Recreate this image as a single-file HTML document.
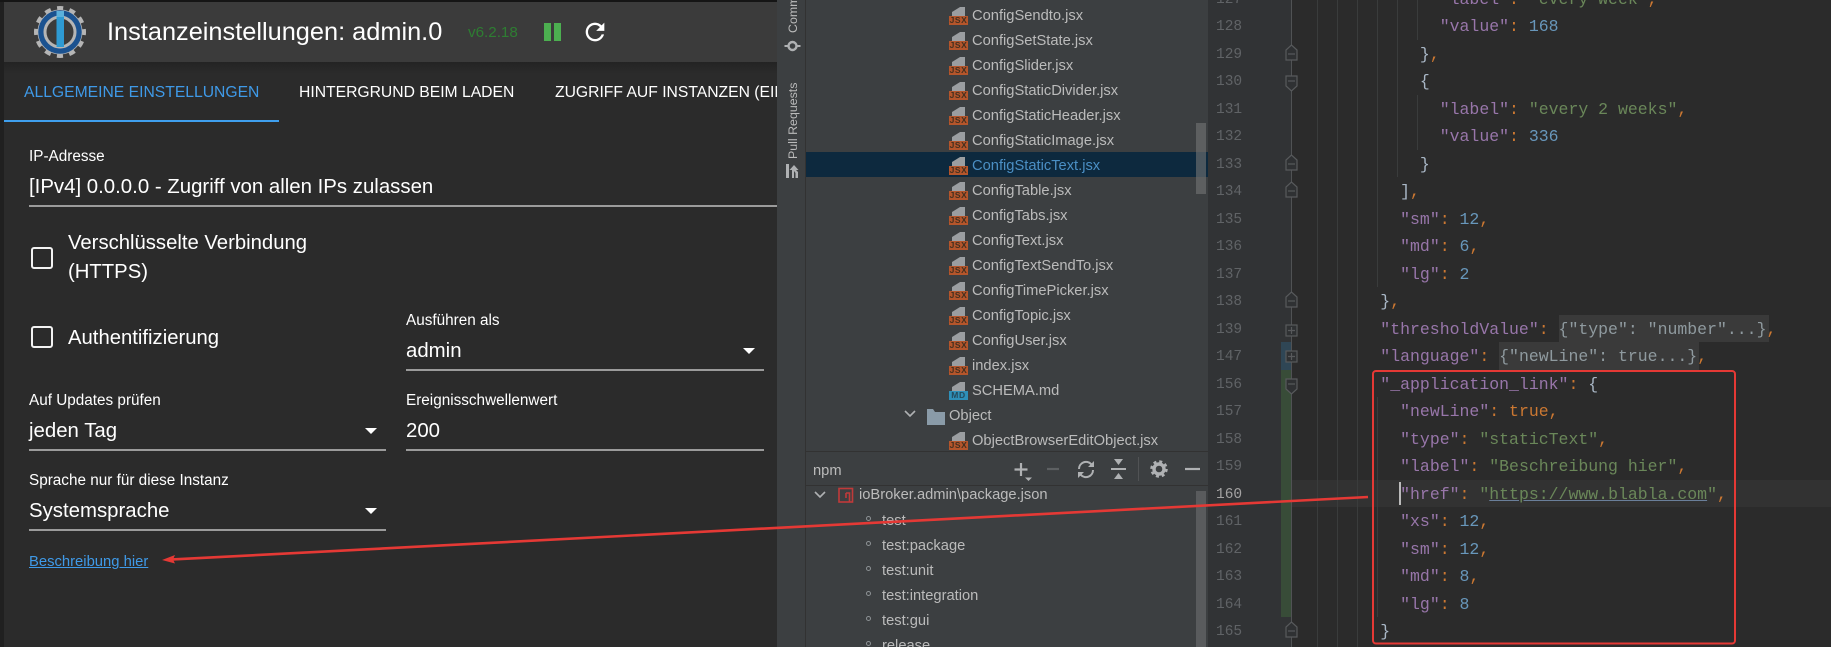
<!DOCTYPE html>
<html><head><meta charset="utf-8"><title>Instanzeinstellungen</title>
<style>
html,body{margin:0;padding:0;width:1831px;height:647px;overflow:hidden;background:#2b2b2b}
body{position:relative;font-family:"Liberation Sans",sans-serif}
.b{position:absolute}
.t{position:absolute;white-space:pre;line-height:24px;height:24px}
.lb{font-size:15.3px;color:#fff}
.v{font-size:20.4px;color:#fff}
.tab{font-size:15.7px;color:#fff}
.ul{position:absolute;height:2px;background:#9b9b9b}
.cb{position:absolute;width:18px;height:18px;border:2px solid #f2f2f2;border-radius:3px;left:31px}
.ar{position:absolute;width:0;height:0;border-left:6px solid transparent;border-right:6px solid transparent;border-top:6px solid #fff}
.f{position:absolute;left:972px;font-size:14.7px;color:#bbb;white-space:pre;line-height:24px;height:24px}
.i{position:absolute;left:949px;width:19px;height:19px}
.i:before{content:"";position:absolute;left:3px;top:0;width:13px;height:9px;background:#9b9ea1;clip-path:polygon(0 100%,0 55%,62% 0,100% 0,100% 100%)}
.i span{position:absolute;left:0;top:9px;width:19px;height:9px;background:#b4552b;color:#43301f;font:bold 8.5px/9px "Liberation Sans",sans-serif;text-align:center;letter-spacing:.6px}
.i.md span{background:#2e8fb8;color:#254a5c}
.c{position:absolute;left:1380.3px;margin-top:1px;font:16.5px/28px "Liberation Mono",monospace;white-space:pre;color:#a9b7c6;height:28px}
.n{position:absolute;left:1216px;margin-top:1px;font:14.5px/28px "Liberation Mono",monospace;color:#606366;height:28px}
.k{color:#9876aa}.s{color:#6a8759}.d{color:#6897bb}.o{color:#cc7832}
.m{position:absolute;left:882px;margin-top:1px;font-size:14.7px;color:#bbb;white-space:pre;line-height:24px;height:24px}
.dot{position:absolute;left:865.5px;width:3px;height:3px;border:1.5px solid #8d9295;border-radius:50%}
</style></head><body>

<!-- left app -->
<div class="b" style="left:0;top:0;width:777px;height:647px;background:#2b2b2b"></div>
<div class="b" style="left:0;top:0;width:4px;height:647px;background:#202020"></div>
<div class="b" style="left:0;top:0;width:777px;height:2px;background:#151515"></div>
<div class="b" style="left:4px;top:2px;width:773px;height:60px;background:#3b3b3b"></div>
<div class="b" style="left:4px;top:62px;width:773px;height:12px;background:linear-gradient(#232323,#2b2b2b)"></div>

<svg class="b" style="left:30px;top:2px" width="60" height="60" viewBox="0 0 60 60">
<circle cx="30" cy="30" r="23.5" fill="none" stroke="#b5b5b5" stroke-width="5" stroke-dasharray="6 6.3" stroke-dashoffset="3"/>
<circle cx="30" cy="30" r="22.5" fill="#b5b5b5"/>
<circle cx="30" cy="30" r="19" fill="none" stroke="#1b5290" stroke-width="5.5"/>
<circle cx="30" cy="30" r="15" fill="#3b3b3b" stroke="#b5b5b5" stroke-width="3"/>
<rect x="26.5" y="9" width="7.5" height="36" fill="#2e9ad3"/>
<rect x="26.5" y="9" width="7.5" height="6" fill="#5cb1dc"/>
</svg>
<div class="t" style="left:107px;top:20px;font-size:25.35px;color:#fff">Instanzeinstellungen: admin.0</div>
<div class="t" style="left:468px;top:21px;font-size:15.2px;color:#2e7d32">v6.2.18</div>
<div class="b" style="left:544px;top:23px;width:6.5px;height:18px;background:#4caf50"></div>
<div class="b" style="left:554px;top:23px;width:6.5px;height:18px;background:#4caf50"></div>
<svg class="b" style="left:581px;top:18px" width="28" height="28" viewBox="0 0 24 24"><path fill="#fff" d="M17.65 6.35C16.2 4.9 14.21 4 12 4c-4.42 0-7.99 3.58-7.99 8s3.57 8 7.99 8c3.73 0 6.84-2.55 7.73-6h-2.08c-.82 2.33-3.04 4-5.65 4-3.31 0-6-2.69-6-6s2.69-6 6-6c1.66 0 3.14.69 4.22 1.78L13 11h7V4l-2.35 2.35z"/></svg>

<div class="t tab" style="left:24px;top:81px;color:#3f9ae8">ALLGEMEINE EINSTELLUNGEN</div>
<div class="t tab" style="left:299px;top:81px">HINTERGRUND BEIM LADEN</div>
<div class="t tab" style="left:555px;top:81px">ZUGRIFF AUF INSTANZEN (EINSTELLUNGEN)</div>
<div class="b" style="left:4px;top:120px;width:275px;height:2px;background:#3f9fee"></div>

<div class="t lb" style="left:29px;top:145px">IP-Adresse</div>
<div class="t v" style="left:29px;top:175px">[IPv4] 0.0.0.0 - Zugriff von allen IPs zulassen</div>
<div class="ul" style="left:29px;top:205px;width:748px"></div>

<div class="cb" style="top:247px"></div>
<div class="t" style="left:68px;top:231px;font-size:20.3px;color:#fff">Verschlüsselte Verbindung</div>
<div class="t" style="left:68px;top:260px;font-size:20.3px;color:#fff">(HTTPS)</div>

<div class="cb" style="top:326px"></div>
<div class="t" style="left:68px;top:326px;font-size:20.3px;color:#fff">Authentifizierung</div>

<div class="t lb" style="left:406px;top:309px">Ausführen als</div>
<div class="t v" style="left:406px;top:339px">admin</div>
<div class="ar" style="left:743px;top:348px"></div>
<div class="ul" style="left:406px;top:369px;width:358px"></div>

<div class="t lb" style="left:29px;top:389px">Auf Updates prüfen</div>
<div class="t v" style="left:29px;top:419px">jeden Tag</div>
<div class="ar" style="left:365px;top:428px"></div>
<div class="ul" style="left:29px;top:449px;width:357px"></div>

<div class="t lb" style="left:406px;top:389px">Ereignisschwellenwert</div>
<div class="t v" style="left:406px;top:419px">200</div>
<div class="ul" style="left:406px;top:449px;width:358px"></div>

<div class="t lb" style="left:29px;top:469px">Sprache nur für diese Instanz</div>
<div class="t v" style="left:29px;top:499px">Systemsprache</div>
<div class="ar" style="left:365px;top:508px"></div>
<div class="ul" style="left:29px;top:529px;width:357px"></div>

<div class="t" style="left:29px;top:550px;font-size:14.8px;color:#3f9ae8;text-decoration:underline">Beschreibung hier</div>

<!-- IDE side bar -->
<div class="b" style="left:777px;top:0;width:28px;height:647px;background:#3c3f41"></div>
<div class="b" style="left:805px;top:0;width:1px;height:647px;background:#323232"></div>
<div class="t" style="left:786px;top:33px;font-size:12.4px;line-height:14px;height:14px;color:#bbb;transform-origin:0 0;transform:rotate(-90deg)">Commit</div>
<svg class="b" style="left:784px;top:38px" width="18" height="16" viewBox="0 0 18 16"><circle cx="8.5" cy="8" r="4" fill="none" stroke="#afb1b3" stroke-width="2.4"/><path d="M0.5 8H4M13 8h3.5" stroke="#afb1b3" stroke-width="2"/></svg>
<div class="t" style="left:786px;top:159px;font-size:12.4px;line-height:14px;height:14px;color:#bbb;transform-origin:0 0;transform:rotate(-90deg)">Pull Requests</div>
<svg class="b" style="left:785px;top:164px" width="16" height="16" viewBox="0 0 16 16"><path d="M1 0v14h3V0zM7 14V6H4.500L9 1l4.500 5H11l2 2v6h-2.500V9L9 7v7z" fill="#afb1b3"/></svg>

<!-- project panel -->
<div class="b" style="left:806px;top:0;width:402px;height:647px;background:#3c3f41"></div>
<div class="b" style="left:806px;top:152px;width:402px;height:25px;background:#0d293e"></div>

<div class="i" style="top:7px"><span>JSX</span></div><div class="f" style="top:4px">ConfigSendto.jsx</div>
<div class="i" style="top:32px"><span>JSX</span></div><div class="f" style="top:29px">ConfigSetState.jsx</div>
<div class="i" style="top:57px"><span>JSX</span></div><div class="f" style="top:54px">ConfigSlider.jsx</div>
<div class="i" style="top:82px"><span>JSX</span></div><div class="f" style="top:79px">ConfigStaticDivider.jsx</div>
<div class="i" style="top:107px"><span>JSX</span></div><div class="f" style="top:104px">ConfigStaticHeader.jsx</div>
<div class="i" style="top:132px"><span>JSX</span></div><div class="f" style="top:129px">ConfigStaticImage.jsx</div>
<div class="i" style="top:157px"><span>JSX</span></div><div class="f" style="top:154px;color:#4b8fc4">ConfigStaticText.jsx</div>
<div class="i" style="top:182px"><span>JSX</span></div><div class="f" style="top:179px">ConfigTable.jsx</div>
<div class="i" style="top:207px"><span>JSX</span></div><div class="f" style="top:204px">ConfigTabs.jsx</div>
<div class="i" style="top:232px"><span>JSX</span></div><div class="f" style="top:229px">ConfigText.jsx</div>
<div class="i" style="top:257px"><span>JSX</span></div><div class="f" style="top:254px">ConfigTextSendTo.jsx</div>
<div class="i" style="top:282px"><span>JSX</span></div><div class="f" style="top:279px">ConfigTimePicker.jsx</div>
<div class="i" style="top:307px"><span>JSX</span></div><div class="f" style="top:304px">ConfigTopic.jsx</div>
<div class="i" style="top:332px"><span>JSX</span></div><div class="f" style="top:329px">ConfigUser.jsx</div>
<div class="i" style="top:357px"><span>JSX</span></div><div class="f" style="top:354px">index.jsx</div>
<div class="i md" style="top:382px"><span>MD</span></div><div class="f" style="top:379px">SCHEMA.md</div>
<svg class="b" style="left:903px;top:408px" width="44" height="18" viewBox="0 0 44 18"><path d="M2 3l5 5 5-5" fill="none" stroke="#afb1b3" stroke-width="1.6"/><path d="M24 1h6l2 3h10v13H24z" fill="#8a9ba8"/></svg>
<div class="f" style="top:404px;left:949px">Object</div>
<div class="i" style="top:432px"><span>JSX</span></div><div class="f" style="top:429px">ObjectBrowserEditObject.jsx</div>

<div class="b" style="left:806px;top:451px;width:402px;height:196px;background:#3c3f41"></div>
<div class="b" style="left:806px;top:451px;width:402px;height:1px;background:#323232"></div>
<div class="b" style="left:806px;top:485px;width:402px;height:1px;background:#323232"></div>
<div class="f" style="left:813px;top:459px">npm</div>
<svg class="b" style="left:1000px;top:452px" width="208" height="34" viewBox="0 0 208 34">
<path d="M21 11v13M14.500 17.500h13" stroke="#afb1b3" stroke-width="2.200"/><path d="M25 25.500h7l-3.500 3.500z" fill="#afb1b3"/>
<path d="M47 17h12" stroke="#5d6062" stroke-width="2.200"/>
<path d="M79 17a7 7 0 0 1 12-5l2 2M93 18a7 7 0 0 1-12 5l-2-2" fill="none" stroke="#afb1b3" stroke-width="2"/><path d="M94 9v6h-6zM78 26v-6h6z" fill="#afb1b3"/>
<path d="M111 17h15" stroke="#afb1b3" stroke-width="2"/><path d="M114 7h9l-4.500 6zM114 27h9l-4.500-6z" fill="#afb1b3"/>
<path d="M138.500 5v24" stroke="#515355" stroke-width="1"/>
<circle cx="159" cy="17" r="5" fill="none" stroke="#afb1b3" stroke-width="3.400"/><circle cx="159" cy="17" r="7.500" fill="none" stroke="#afb1b3" stroke-width="2.500" stroke-dasharray="3 2.890"/>
<path d="M185 17h15" stroke="#afb1b3" stroke-width="2.200"/>
</svg>
<svg class="b" style="left:812px;top:486px" width="44" height="18" viewBox="0 0 44 18"><path d="M3 6l5 5 5-5" fill="none" stroke="#afb1b3" stroke-width="1.600"/><rect x="27" y="2.500" width="13.500" height="13.500" fill="none" stroke="#c03a3a" stroke-width="1.600"/><path d="M34 7h3.500v9M34 7v5" fill="none" stroke="#c03a3a" stroke-width="1.600"/></svg>
<div class="f" style="left:859px;top:483px">ioBroker.admin\package.json</div>
<div class="dot" style="top:516px"></div><div class="m" style="top:508px">test</div>
<div class="dot" style="top:541px"></div><div class="m" style="top:533px">test:package</div>
<div class="dot" style="top:566px"></div><div class="m" style="top:558px">test:unit</div>
<div class="dot" style="top:591px"></div><div class="m" style="top:583px">test:integration</div>
<div class="dot" style="top:616px"></div><div class="m" style="top:608px">test:gui</div>
<div class="dot" style="top:641px"></div><div class="m" style="top:633px">release</div>

<div class="b" style="left:1196px;top:123px;width:10px;height:71px;background:rgba(110,112,114,.65)"></div>
<div class="b" style="left:1196px;top:491px;width:10px;height:156px;background:#595b5d"></div>

<!-- editor -->
<div class="b" style="left:1208px;top:0;width:84px;height:647px;background:#313335"></div>
<div class="b" style="left:1292px;top:0;width:539px;height:647px;background:#2b2b2b"></div>
<div class="b" style="left:1292px;top:480px;width:539px;height:27px;background:#323232"></div>
<div class="b" style="left:1280.500px;top:342px;width:11px;height:28px;background:#2f4655"></div>
<div class="b" style="left:1280.500px;top:370px;width:11px;height:247px;background:#384c38"></div>
<div class="b" style="left:1559px;top:315px;width:210px;height:27px;background:#3a3a3a"></div>
<div class="b" style="left:1499px;top:342px;width:200px;height:28px;background:#3a3a3a"></div>

<svg class="b" style="left:1280px;top:0" width="160" height="647" viewBox="0 0 160 647">
<g stroke="#3a3c3c" stroke-width="1" fill="none">
<path d="M37.500 0V647M57.500 0V647M77.500 0V647"/>
<path d="M97.500 0V287M97.500 397V617"/>
<path d="M117.500 0V177"/>
<path d="M137.500 0V40M137.500 95V150"/>
</g>
<path d="M11.500 0V647" stroke="#505254" stroke-width="1"/>
<g fill="#2f3133" stroke="#585a5c" stroke-width="1.200">
<path d="M6 60V50l5.500-5 5.500 5v10z"/><path d="M8 54h7"/>
<path d="M6 76h11v10l-5.500 5-5.500-5z"/><path d="M8 81h7"/>
<path d="M6 170V160l5.500-5 5.500 5v10z"/><path d="M8 164h7"/>
<path d="M6 197V187l5.500-5 5.500 5v10z"/><path d="M8 191h7"/>
<path d="M6 307V297l5.500-5 5.500 5v10z"/><path d="M8 301h7"/>
<rect x="6" y="325" width="11" height="11"/><path d="M8 330.500h7M11.500 327v7"/>
<rect x="6" y="351" width="11" height="11"/><path d="M8 356.500h7M11.500 353v7"/>
<path d="M6 379h11v10l-5.500 5-5.500-5z"/><path d="M8 384h7"/>
<path d="M6 637V627l5.500-5 5.500 5v10z"/><path d="M8 631h7"/>
</g>
</svg>

<div class="n" style="top:-15px">127</div>
<div class="n" style="top:12px">128</div>
<div class="n" style="top:40px">129</div>
<div class="n" style="top:67px">130</div>
<div class="n" style="top:95px">131</div>
<div class="n" style="top:122px">132</div>
<div class="n" style="top:150px">133</div>
<div class="n" style="top:177px">134</div>
<div class="n" style="top:205px">135</div>
<div class="n" style="top:232px">136</div>
<div class="n" style="top:260px">137</div>
<div class="n" style="top:287px">138</div>
<div class="n" style="top:315px">139</div>
<div class="n" style="top:342px">147</div>
<div class="n" style="top:370px">156</div>
<div class="n" style="top:397px">157</div>
<div class="n" style="top:425px">158</div>
<div class="n" style="top:452px">159</div>
<div class="n" style="top:480px;color:#a4a3a3">160</div>
<div class="n" style="top:507px">161</div>
<div class="n" style="top:535px">162</div>
<div class="n" style="top:562px">163</div>
<div class="n" style="top:590px">164</div>
<div class="n" style="top:617px">165</div>

<div class="c" style="top:-15px">      <span class="k">"label"</span><span class="o">:</span> <span class="s">"every week"</span><span class="o">,</span></div>
<div class="c" style="top:12px">      <span class="k">"value"</span><span class="o">:</span> <span class="d">168</span></div>
<div class="c" style="top:40px">    }<span class="o">,</span></div>
<div class="c" style="top:67px">    {</div>
<div class="c" style="top:95px">      <span class="k">"label"</span><span class="o">:</span> <span class="s">"every 2 weeks"</span><span class="o">,</span></div>
<div class="c" style="top:122px">      <span class="k">"value"</span><span class="o">:</span> <span class="d">336</span></div>
<div class="c" style="top:150px">    }</div>
<div class="c" style="top:177px">  ]<span class="o">,</span></div>
<div class="c" style="top:205px">  <span class="k">"sm"</span><span class="o">:</span> <span class="d">12</span><span class="o">,</span></div>
<div class="c" style="top:232px">  <span class="k">"md"</span><span class="o">:</span> <span class="d">6</span><span class="o">,</span></div>
<div class="c" style="top:260px">  <span class="k">"lg"</span><span class="o">:</span> <span class="d">2</span></div>
<div class="c" style="top:287px">}<span class="o">,</span></div>
<div class="c" style="top:315px"><span class="k">"thresholdValue"</span><span class="o">:</span> <span style="color:#8f9a9f">{"type": "number"...}</span><span class="o">,</span></div>
<div class="c" style="top:342px"><span class="k">"language"</span><span class="o">:</span> <span style="color:#8f9a9f">{"newLine": true...}</span><span class="o">,</span></div>
<div class="c" style="top:370px"><span class="k">"_application_link"</span><span class="o">:</span> {</div>
<div class="c" style="top:397px">  <span class="k">"newLine"</span><span class="o">:</span> <span class="o">true,</span></div>
<div class="c" style="top:425px">  <span class="k">"type"</span><span class="o">:</span> <span class="s">"staticText"</span><span class="o">,</span></div>
<div class="c" style="top:452px">  <span class="k">"label"</span><span class="o">:</span> <span class="s">"Beschreibung hier"</span><span class="o">,</span></div>
<div class="c" style="top:480px">  <span class="k">"href"</span><span class="o">:</span> <span class="s">"<span style="text-decoration:underline;text-decoration-color:#6a7f9a">https://www.blabla.com</span>"</span><span class="o">,</span></div>
<div class="c" style="top:507px">  <span class="k">"xs"</span><span class="o">:</span> <span class="d">12</span><span class="o">,</span></div>
<div class="c" style="top:535px">  <span class="k">"sm"</span><span class="o">:</span> <span class="d">12</span><span class="o">,</span></div>
<div class="c" style="top:562px">  <span class="k">"md"</span><span class="o">:</span> <span class="d">8</span><span class="o">,</span></div>
<div class="c" style="top:590px">  <span class="k">"lg"</span><span class="o">:</span> <span class="d">8</span></div>
<div class="c" style="top:617px">}</div>
<div class="b" style="left:1398.500px;top:482px;width:2px;height:23px;background:#bbb"></div>

<!-- annotations -->
<svg class="b" style="left:0;top:0" width="1831" height="647" viewBox="0 0 1831 647">
<rect x="1373" y="371" width="362" height="272.500" rx="3" fill="none" stroke="#e53935" stroke-width="2"/>
<path d="M1368 497L170 559.600" stroke="#e53935" stroke-width="2.600" fill="none"/>
<path d="M162 560l13-5-2 4.500 2 4z" fill="#e53935"/>
</svg>
</body></html>
